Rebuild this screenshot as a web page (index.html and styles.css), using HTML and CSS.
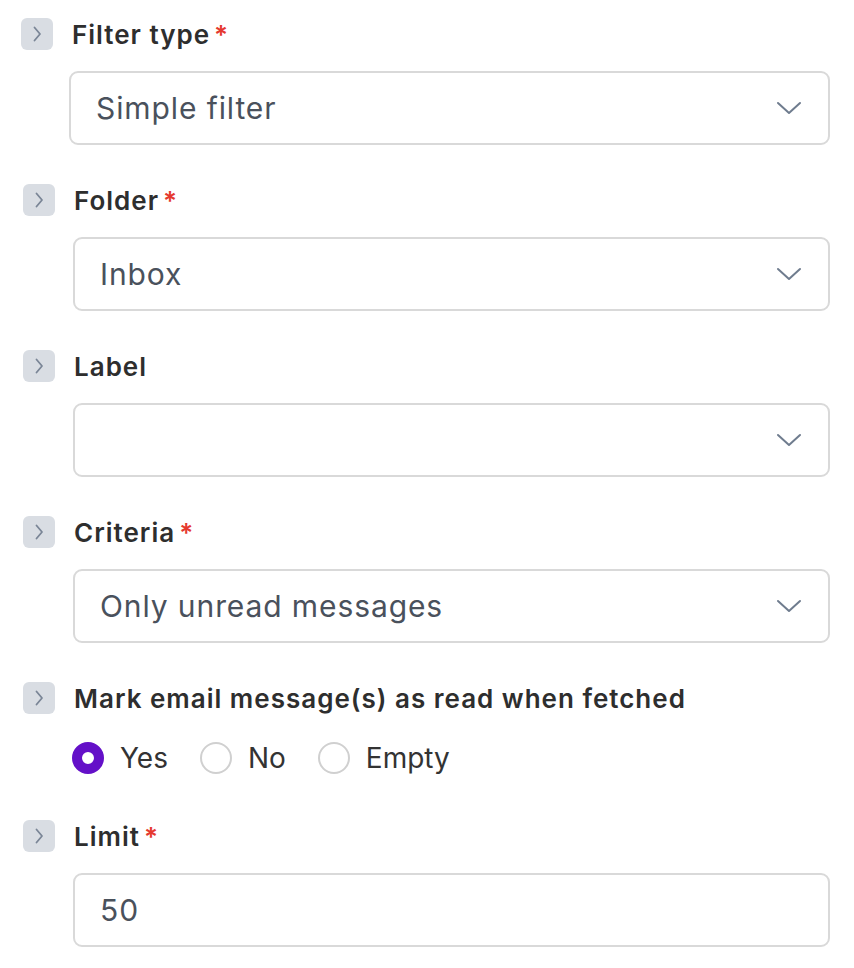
FILE: index.html
```html
<!DOCTYPE html>
<html lang="en">
<head>
<meta charset="utf-8">
<title>Email trigger settings</title>
<link rel="stylesheet" href="styles.css">
</head>
<body>
<form class="form">
  <div class="field field--first">
    <div class="field-head">
      <button type="button" class="toggle" aria-label="Expand"><svg width="12" height="18" viewBox="0 0 12 18"><path d="M3.5 2.5 L9 9 L3.5 15.5" fill="none" stroke="currentColor" stroke-width="1.8" stroke-linecap="round" stroke-linejoin="round"/></svg></button>
      <span class="label">Filter type<span class="req">*</span></span>
    </div>
    <div class="select"><span class="value">Simple filter</span><svg class="caret" width="26" height="14" viewBox="0 0 26 14"><path d="M2 2 L13 12 L24 2" fill="none" stroke="currentColor" stroke-width="2" stroke-linecap="round" stroke-linejoin="round"/></svg></div>
  </div>

  <div class="field">
    <div class="field-head">
      <button type="button" class="toggle" aria-label="Expand"><svg width="12" height="18" viewBox="0 0 12 18"><path d="M3.5 2.5 L9 9 L3.5 15.5" fill="none" stroke="currentColor" stroke-width="1.8" stroke-linecap="round" stroke-linejoin="round"/></svg></button>
      <span class="label">Folder<span class="req">*</span></span>
    </div>
    <div class="select"><span class="value">Inbox</span><svg class="caret" width="26" height="14" viewBox="0 0 26 14"><path d="M2 2 L13 12 L24 2" fill="none" stroke="currentColor" stroke-width="2" stroke-linecap="round" stroke-linejoin="round"/></svg></div>
  </div>

  <div class="field">
    <div class="field-head">
      <button type="button" class="toggle" aria-label="Expand"><svg width="12" height="18" viewBox="0 0 12 18"><path d="M3.5 2.5 L9 9 L3.5 15.5" fill="none" stroke="currentColor" stroke-width="1.8" stroke-linecap="round" stroke-linejoin="round"/></svg></button>
      <span class="label">Label</span>
    </div>
    <div class="select"><span class="value"></span><svg class="caret" width="26" height="14" viewBox="0 0 26 14"><path d="M2 2 L13 12 L24 2" fill="none" stroke="currentColor" stroke-width="2" stroke-linecap="round" stroke-linejoin="round"/></svg></div>
  </div>

  <div class="field">
    <div class="field-head">
      <button type="button" class="toggle" aria-label="Expand"><svg width="12" height="18" viewBox="0 0 12 18"><path d="M3.5 2.5 L9 9 L3.5 15.5" fill="none" stroke="currentColor" stroke-width="1.8" stroke-linecap="round" stroke-linejoin="round"/></svg></button>
      <span class="label">Criteria<span class="req">*</span></span>
    </div>
    <div class="select"><span class="value">Only unread messages</span><svg class="caret" width="26" height="14" viewBox="0 0 26 14"><path d="M2 2 L13 12 L24 2" fill="none" stroke="currentColor" stroke-width="2" stroke-linecap="round" stroke-linejoin="round"/></svg></div>
  </div>

  <div class="field field--radio">
    <div class="field-head">
      <button type="button" class="toggle" aria-label="Expand"><svg width="12" height="18" viewBox="0 0 12 18"><path d="M3.5 2.5 L9 9 L3.5 15.5" fill="none" stroke="currentColor" stroke-width="1.8" stroke-linecap="round" stroke-linejoin="round"/></svg></button>
      <span class="label">Mark email message(s) as read when fetched</span>
    </div>
    <div class="radios">
      <span class="radio"><span class="dot dot--on"></span>Yes</span>
      <span class="radio"><span class="dot"></span>No</span>
      <span class="radio"><span class="dot"></span>Empty</span>
    </div>
  </div>

  <div class="field">
    <div class="field-head">
      <button type="button" class="toggle" aria-label="Expand"><svg width="12" height="18" viewBox="0 0 12 18"><path d="M3.5 2.5 L9 9 L3.5 15.5" fill="none" stroke="currentColor" stroke-width="1.8" stroke-linecap="round" stroke-linejoin="round"/></svg></button>
      <span class="label">Limit<span class="req">*</span></span>
    </div>
    <div class="select select--input"><span class="value">50</span></div>
  </div>
</form>
</body>
</html>
```

FILE: styles.css
```css
* { box-sizing: border-box; }
html, body { margin: 0; background: #ffffff; }
body {
  font-family: Inter, "Noto Sans", "Liberation Sans", sans-serif;
  color: #333333;
}
.form {
  display: flex;
  flex-direction: column;
  gap: 39px;
  padding: 18px 24px 0 23px;
}
.field {
  display: flex;
  flex-direction: column;
  gap: 21px;
}
.field--first { margin-left: -2px; }
.field--first .select { margin-left: 48px; }
.field-head {
  display: flex;
  align-items: center;
  gap: 19px;
  height: 32px;
}
.toggle {
  width: 32px;
  height: 32px;
  flex: none;
  border: 0;
  padding: 0;
  border-radius: 6px;
  background: #d9dde3;
  color: #7a8596;
  display: flex;
  align-items: center;
  justify-content: center;
}
.label {
  font-size: 26px;
  font-weight: 600;
  letter-spacing: 1px;
  color: #2e2e2e;
}
.req {
  color: #e5392f;
  margin-left: 4px;
}
.select {
  margin-left: 50px;
  height: 74px;
  border: 2px solid #d9d9d9;
  border-radius: 9px;
  display: flex;
  align-items: center;
  justify-content: space-between;
  padding: 0 26px 0 25px;
}
.value {
  font-size: 30px;
  letter-spacing: 0.9px;
  color: #4a515c;
}
.caret { color: #6f7c8e; flex: none; }
.field--radio { gap: 24px; }
.radios {
  margin-left: 49px;
  height: 40px;
  display: flex;
  align-items: center;
  gap: 32px;
  margin-bottom: 3px;
}
.radio {
  display: flex;
  align-items: center;
  gap: 16px;
  font-size: 28px;
  color: #333333;
}
.dot {
  width: 32px;
  height: 32px;
  border-radius: 50%;
  border: 2px solid #d0d0d0;
  background: #fff;
}
.dot--on {
  border: 10px solid #6410c8;
}
```
